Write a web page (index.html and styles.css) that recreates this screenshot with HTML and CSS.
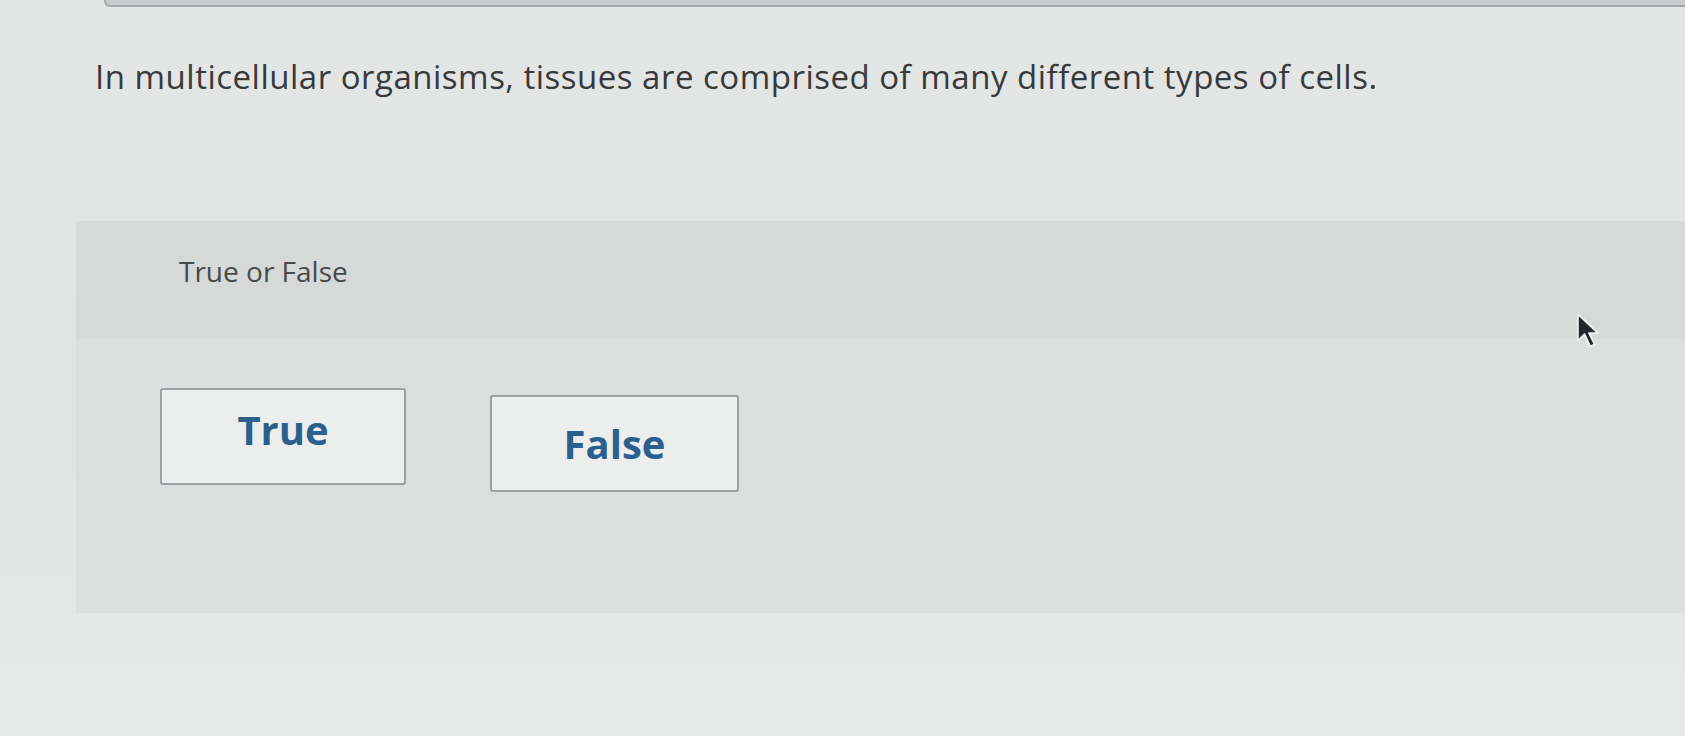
FILE: index.html
```html
<!DOCTYPE html>
<html>
<head>
<meta charset="utf-8">
<link rel="stylesheet" href="styles.css">
</head>
<body>
<div class="topbar"></div>
<p class="question">In multicellular organisms, tissues are comprised of many different types of cells.</p>
<section class="panel">
  <div class="panel-head">True or False</div>
  <div class="panel-body">
    <button class="choice choice-true">True</button>
    <button class="choice choice-false">False</button>
  </div>
</section>
<svg class="cursor" width="30" height="40" viewBox="0 0 26 36">
  <path d="M3 2 L3 26 L9 20 L14 31 L18 29 L13 19 L21 19 Z" fill="#24282c" stroke="#f2f2f2" stroke-width="1.6" stroke-linejoin="round"/>
</svg>
</body>
</html>
```
FILE: styles.css
```css
html, body {
  margin: 0;
  padding: 0;
}
body {
  width: 1685px;
  height: 736px;
  overflow: hidden;
  background: linear-gradient(180deg, #e4e6e5 0%, #e1e4e3 60%, #e6e9e8 100%);
  font-family: "Open Sans", Lato, "Liberation Sans", sans-serif;
  position: relative;
}
.topbar {
  margin-left: 104px;
  height: 5px;
  background: #c9cccc;
  border-bottom: 2px solid #a4a8a8;
  border-left: 2px solid #a4a8a8;
  border-bottom-left-radius: 6px;
}
.question {
  margin: 50px 0 0 95px;
  font-size: 33px;
  line-height: 40px;
  color: #38393a;
  letter-spacing: 0.5px;
}
.panel {
  margin: 124px 0 0 76px;
  height: 392px;
  background: #dcdfde;
}
.panel-head {
  height: 118px;
  box-sizing: border-box;
  padding: 31px 0 0 103px;
  background: #d6d9d8;
  font-size: 28px;
  line-height: 38px;
  color: #48494a;
}
.panel-body {
  display: flex;
  align-items: flex-start;
  gap: 84px;
  padding: 49px 0 0 84px;
}
.choice {
  width: 246px;
  height: 97px;
  background: #eceeed;
  border: 2px solid #9aa2a5;
  border-radius: 3px;
  font-family: "Open Sans", Lato, "Liberation Sans", sans-serif;
  font-weight: 700;
  font-size: 40px;
  color: #2b5f8d;
  padding: 0;
}
.choice-true {
  padding-bottom: 14px;
}
.choice-false {
  width: 249px;
  margin-top: 7px;
}
.cursor {
  position: absolute;
  left: 1574px;
  top: 312px;
}
```
